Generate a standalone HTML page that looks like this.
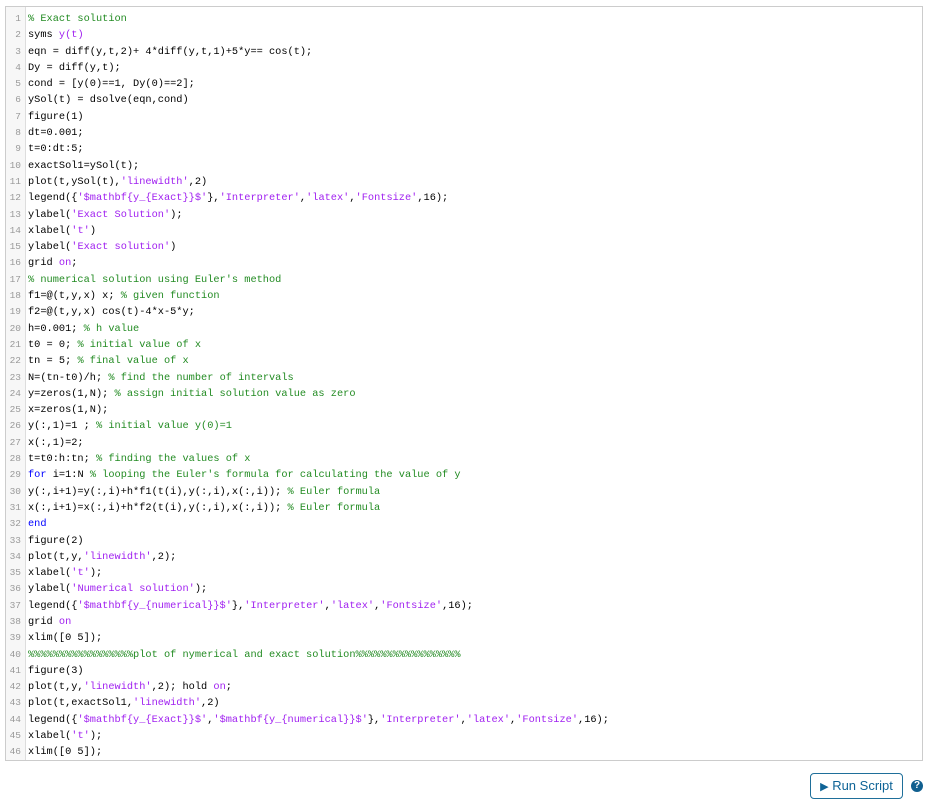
<!DOCTYPE html>
<html><head><meta charset="utf-8"><style>
body{margin:0;background:#fff;width:936px;height:805px;position:relative;overflow:hidden;font-family:"Liberation Sans",sans-serif}
.box{position:absolute;left:5px;top:6px;width:918px;height:755px;border:1px solid #ccc;box-sizing:border-box;overflow:hidden}
.gut{position:absolute;left:0;top:0;bottom:0;width:19px;background:#f7f7f7;border-right:1px solid #ddd}
.code{position:absolute;left:0;top:4px;font-family:"Liberation Mono",monospace;font-size:10.3px;line-height:16.3px;color:#000}
.l{display:flex;white-space:pre;height:16.3px}
.n{width:15px;text-align:right;color:#999;font-size:9.5px;padding-right:7px}
.c{color:#228B22}.s{color:#A020F0}.k{color:#0000FF}
.btn{position:absolute;left:810px;top:773px;width:93px;height:26px;box-sizing:border-box;border:1px solid #1f6f9a;border-radius:4px;color:#0e6396;font-size:13px;line-height:24px;text-align:center}
.help{position:absolute;left:911px;top:780px;width:12px;height:12px;border-radius:50%;background:#105f8f;color:#fff;font-size:10px;font-weight:bold;text-align:center;line-height:12px}
</style></head><body>
<div class="box"><div class="gut"></div><div class="code">
<div class="l"><span class="n">1</span><span><span class="c">% Exact solution</span></span></div>
<div class="l"><span class="n">2</span><span>syms <span class="s">y(t)</span></span></div>
<div class="l"><span class="n">3</span><span>eqn = diff(y,t,2)+ 4*diff(y,t,1)+5*y== cos(t);</span></div>
<div class="l"><span class="n">4</span><span>Dy = diff(y,t);</span></div>
<div class="l"><span class="n">5</span><span>cond = [y(0)==1, Dy(0)==2];</span></div>
<div class="l"><span class="n">6</span><span>ySol(t) = dsolve(eqn,cond)</span></div>
<div class="l"><span class="n">7</span><span>figure(1)</span></div>
<div class="l"><span class="n">8</span><span>dt=0.001;</span></div>
<div class="l"><span class="n">9</span><span>t=0:dt:5;</span></div>
<div class="l"><span class="n">10</span><span>exactSol1=ySol(t);</span></div>
<div class="l"><span class="n">11</span><span>plot(t,ySol(t),<span class="s">'linewidth'</span>,2)</span></div>
<div class="l"><span class="n">12</span><span>legend({<span class="s">'$mathbf{y_{Exact}}$'</span>},<span class="s">'Interpreter'</span>,<span class="s">'latex'</span>,<span class="s">'Fontsize'</span>,16);</span></div>
<div class="l"><span class="n">13</span><span>ylabel(<span class="s">'Exact Solution'</span>);</span></div>
<div class="l"><span class="n">14</span><span>xlabel(<span class="s">'t'</span>)</span></div>
<div class="l"><span class="n">15</span><span>ylabel(<span class="s">'Exact solution'</span>)</span></div>
<div class="l"><span class="n">16</span><span>grid <span class="s">on</span>;</span></div>
<div class="l"><span class="n">17</span><span><span class="c">% numerical solution using Euler's method</span></span></div>
<div class="l"><span class="n">18</span><span>f1=@(t,y,x) x; <span class="c">% given function</span></span></div>
<div class="l"><span class="n">19</span><span>f2=@(t,y,x) cos(t)-4*x-5*y;</span></div>
<div class="l"><span class="n">20</span><span>h=0.001; <span class="c">% h value</span></span></div>
<div class="l"><span class="n">21</span><span>t0 = 0; <span class="c">% initial value of x</span></span></div>
<div class="l"><span class="n">22</span><span>tn = 5; <span class="c">% final value of x</span></span></div>
<div class="l"><span class="n">23</span><span>N=(tn-t0)/h; <span class="c">% find the number of intervals</span></span></div>
<div class="l"><span class="n">24</span><span>y=zeros(1,N); <span class="c">% assign initial solution value as zero</span></span></div>
<div class="l"><span class="n">25</span><span>x=zeros(1,N);</span></div>
<div class="l"><span class="n">26</span><span>y(:,1)=1 ; <span class="c">% initial value y(0)=1</span></span></div>
<div class="l"><span class="n">27</span><span>x(:,1)=2;</span></div>
<div class="l"><span class="n">28</span><span>t=t0:h:tn; <span class="c">% finding the values of x</span></span></div>
<div class="l"><span class="n">29</span><span><span class="k">for</span> i=1:N <span class="c">% looping the Euler's formula for calculating the value of y</span></span></div>
<div class="l"><span class="n">30</span><span>y(:,i+1)=y(:,i)+h*f1(t(i),y(:,i),x(:,i)); <span class="c">% Euler formula</span></span></div>
<div class="l"><span class="n">31</span><span>x(:,i+1)=x(:,i)+h*f2(t(i),y(:,i),x(:,i)); <span class="c">% Euler formula</span></span></div>
<div class="l"><span class="n">32</span><span><span class="k">end</span></span></div>
<div class="l"><span class="n">33</span><span>figure(2)</span></div>
<div class="l"><span class="n">34</span><span>plot(t,y,<span class="s">'linewidth'</span>,2);</span></div>
<div class="l"><span class="n">35</span><span>xlabel(<span class="s">'t'</span>);</span></div>
<div class="l"><span class="n">36</span><span>ylabel(<span class="s">'Numerical solution'</span>);</span></div>
<div class="l"><span class="n">37</span><span>legend({<span class="s">'$mathbf{y_{numerical}}$'</span>},<span class="s">'Interpreter'</span>,<span class="s">'latex'</span>,<span class="s">'Fontsize'</span>,16);</span></div>
<div class="l"><span class="n">38</span><span>grid <span class="s">on</span></span></div>
<div class="l"><span class="n">39</span><span>xlim([0 5]);</span></div>
<div class="l"><span class="n">40</span><span><span class="c">%%%%%%%%%%%%%%%%%plot of nymerical and exact solution%%%%%%%%%%%%%%%%%</span></span></div>
<div class="l"><span class="n">41</span><span>figure(3)</span></div>
<div class="l"><span class="n">42</span><span>plot(t,y,<span class="s">'linewidth'</span>,2); hold <span class="s">on</span>;</span></div>
<div class="l"><span class="n">43</span><span>plot(t,exactSol1,<span class="s">'linewidth'</span>,2)</span></div>
<div class="l"><span class="n">44</span><span>legend({<span class="s">'$mathbf{y_{Exact}}$'</span>,<span class="s">'$mathbf{y_{numerical}}$'</span>},<span class="s">'Interpreter'</span>,<span class="s">'latex'</span>,<span class="s">'Fontsize'</span>,16);</span></div>
<div class="l"><span class="n">45</span><span>xlabel(<span class="s">'t'</span>);</span></div>
<div class="l"><span class="n">46</span><span>xlim([0 5]);</span></div>
</div></div>
<div class="btn"><span style="font-size:11px">&#9654;</span> Run Script</div>
<div class="help">?</div>
</body></html>
